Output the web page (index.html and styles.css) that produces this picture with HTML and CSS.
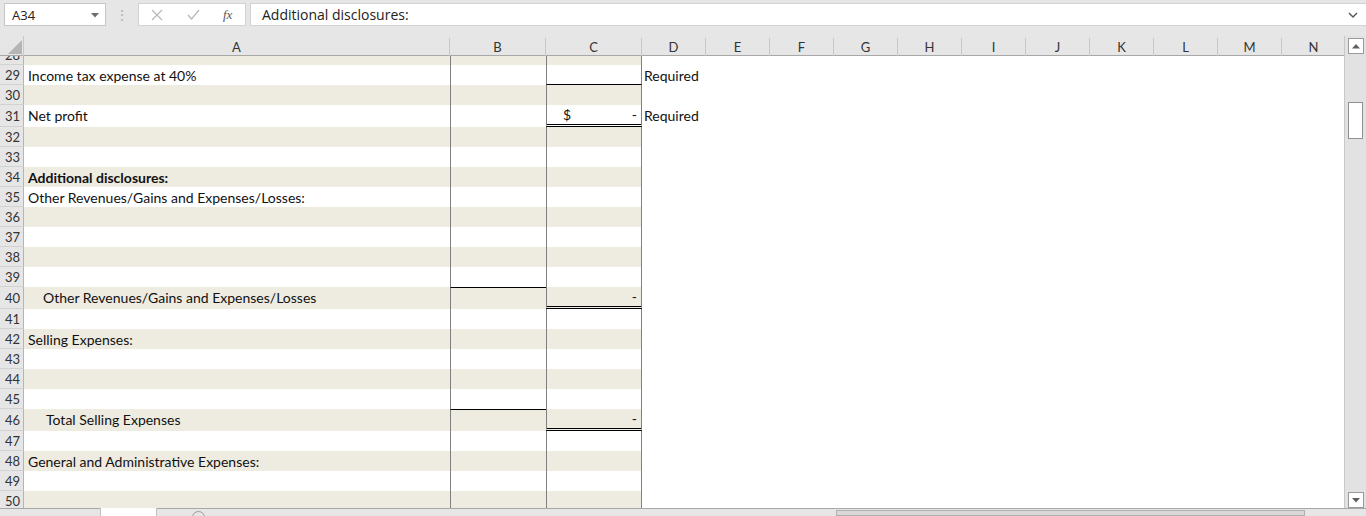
FILE: index.html
```html
<!DOCTYPE html>
<html>
<head>
<meta charset="utf-8">
<link rel="stylesheet" href="styles.css">
</head>
<body>
<div class="app">
  <div class="fbar">
    <div class="namebox">
      <span class="nb-text">A34</span>
      <svg class="nb-arrow" width="8" height="5" viewBox="0 0 8 5"><polygon points="0,0 8,0 4,4.5" fill="#6d6d6d"/></svg>
    </div>
    <div class="dots">⋮</div>
    <div class="fbtns">
      <svg class="fb-x" width="12" height="12" viewBox="0 0 12 12"><path d="M1 1 L11 11 M11 1 L1 11" stroke="#b8b8b8" stroke-width="1.2" fill="none"/></svg>
      <svg class="fb-ok" width="13" height="11" viewBox="0 0 13 11"><path d="M1 6 L4.5 10 L12 1" stroke="#b8b8b8" stroke-width="1.2" fill="none"/></svg>
      <span class="fx">fx</span>
    </div>
    <div class="finput">
      <span class="ftext">Additional disclosures:</span>
      <svg class="fchev" width="10" height="6" viewBox="0 0 10 6"><path d="M1 1 L5 5 L9 1" stroke="#555" stroke-width="1.4" fill="none"/></svg>
    </div>
  </div>
  <div class="main">
    <div class="sheet">
      <div class="colhdr">
        <div class="corner"><svg width="24" height="20" viewBox="0 0 24 20"><polygon points="8,18 22,18 22,4" fill="#b5b5b5"/></svg></div>
        <div class="ch cha">A</div>
        <div class="ch">B</div>
        <div class="ch">C</div>
        <div class="ch">D</div>
        <div class="ch">E</div>
        <div class="ch">F</div>
        <div class="ch">G</div>
        <div class="ch">H</div>
        <div class="ch">I</div>
        <div class="ch">J</div>
        <div class="ch">K</div>
        <div class="ch">L</div>
        <div class="ch">M</div>
        <div class="ch">N</div>
      </div>
      <div class="rowsclip">
        <div class="rows">
          <div class="row tan first"><div class="rh">28</div><div class="a"></div><div class="b"></div><div class="c"></div><div class="d"></div></div>
          <div class="row"><div class="rh">29</div><div class="a">Income tax expense at 40%</div><div class="b"></div><div class="c bb"></div><div class="d">Required</div></div>
          <div class="row tan"><div class="rh">30</div><div class="a"></div><div class="b"></div><div class="c"></div><div class="d"></div></div>
          <div class="row tall"><div class="rh">31</div><div class="a">Net profit</div><div class="b"></div><div class="c dbl acct"><span class="cur">$</span><span class="dash">-</span></div><div class="d">Required</div></div>
          <div class="row tan"><div class="rh">32</div><div class="a"></div><div class="b"></div><div class="c"></div><div class="d"></div></div>
          <div class="row"><div class="rh">33</div><div class="a"></div><div class="b"></div><div class="c"></div><div class="d"></div></div>
          <div class="row tan"><div class="rh">34</div><div class="a bold">Additional disclosures:</div><div class="b"></div><div class="c"></div><div class="d"></div></div>
          <div class="row"><div class="rh">35</div><div class="a">Other Revenues/Gains and Expenses/Losses:</div><div class="b"></div><div class="c"></div><div class="d"></div></div>
          <div class="row tan"><div class="rh">36</div><div class="a"></div><div class="b"></div><div class="c"></div><div class="d"></div></div>
          <div class="row"><div class="rh">37</div><div class="a"></div><div class="b"></div><div class="c"></div><div class="d"></div></div>
          <div class="row tan"><div class="rh">38</div><div class="a"></div><div class="b"></div><div class="c"></div><div class="d"></div></div>
          <div class="row"><div class="rh">39</div><div class="a"></div><div class="b"></div><div class="c"></div><div class="d"></div></div>
          <div class="row tan tall"><div class="rh">40</div><div class="a ind1">Other Revenues/Gains and Expenses/Losses</div><div class="b bt"></div><div class="c dbl acct"><span class="cur"></span><span class="dash">-</span></div><div class="d"></div></div>
          <div class="row"><div class="rh">41</div><div class="a"></div><div class="b"></div><div class="c"></div><div class="d"></div></div>
          <div class="row tan"><div class="rh">42</div><div class="a">Selling Expenses:</div><div class="b"></div><div class="c"></div><div class="d"></div></div>
          <div class="row"><div class="rh">43</div><div class="a"></div><div class="b"></div><div class="c"></div><div class="d"></div></div>
          <div class="row tan"><div class="rh">44</div><div class="a"></div><div class="b"></div><div class="c"></div><div class="d"></div></div>
          <div class="row"><div class="rh">45</div><div class="a"></div><div class="b"></div><div class="c"></div><div class="d"></div></div>
          <div class="row tan tall"><div class="rh">46</div><div class="a ind2">Total Selling Expenses</div><div class="b bt"></div><div class="c dbl acct"><span class="cur"></span><span class="dash">-</span></div><div class="d"></div></div>
          <div class="row"><div class="rh">47</div><div class="a"></div><div class="b"></div><div class="c"></div><div class="d"></div></div>
          <div class="row tan"><div class="rh">48</div><div class="a">General and Administrative Expenses:</div><div class="b"></div><div class="c"></div><div class="d"></div></div>
          <div class="row"><div class="rh">49</div><div class="a"></div><div class="b"></div><div class="c"></div><div class="d"></div></div>
          <div class="row tan"><div class="rh">50</div><div class="a"></div><div class="b"></div><div class="c"></div><div class="d"></div></div>
        </div>
      </div>
    </div>
    <div class="vscroll">
      <div class="sbtn"><svg width="8" height="5" viewBox="0 0 8 5"><polygon points="0,4.5 8,4.5 4,0" fill="#606060"/></svg></div>
      <div class="strack"><div class="sthumb"></div></div>
      <div class="sbtn"><svg width="8" height="5" viewBox="0 0 8 5"><polygon points="0,0 8,0 4,4.5" fill="#606060"/></svg></div>
    </div>
  </div>
  <div class="tabs">
    <div class="tabgap"></div>
    <div class="tab"></div>
    <div class="newsheet"></div>
    <div class="tabfill"></div>
    <div class="hscroll"></div>
    <div class="hfill"></div>
  </div>
</div>
</body>
</html>
```

FILE: styles.css
```css
* { box-sizing: border-box; }
html, body { margin: 0; padding: 0; }
body {
  width: 1366px;
  height: 516px;
  overflow: hidden;
  background: #e6e6e6;
  font-family: Lato, "Open Sans", sans-serif;
  color: #000;
}
.app { width: 1366px; height: 516px; display: flex; flex-direction: column; overflow: hidden; }

/* formula bar */
.fbar {
  height: 36px;
  flex: none;
  display: flex;
  align-items: flex-start;
  padding-top: 3px;
  background: #e6e6e6;
}
.namebox {
  margin-left: 4px;
  width: 102px;
  height: 23px;
  background: #fff;
  border: 1px solid #c6c6c6;
  display: flex;
  align-items: center;
  padding-left: 7px;
  padding-right: 6px;
  justify-content: space-between;
}
.nb-text { font-size: 13px; color: #222; font-family: "Open Sans", sans-serif; }
.nb-arrow { margin-top: 1px; }
.dots { width: 32px; text-align: center; color: #b3b3b3; font-size: 14px; line-height: 23px; }
.fbtns {
  width: 108px;
  height: 23px;
  background: #fff;
  border: 1px solid #d4d4d4;
  display: flex;
  align-items: center;
  padding-left: 12px;
}
.fb-x { margin-right: 24px; }
.fb-ok { margin-right: 23px; }
.fx { font-family: "Liberation Serif", serif; font-style: italic; font-size: 13px; color: #555; }
.finput {
  margin-left: 4px;
  flex: 1;
  height: 23px;
  background: #fff;
  border: 1px solid #d4d4d4;
  border-right: none;
  display: flex;
  align-items: center;
  justify-content: space-between;
  padding-left: 11px;
  padding-right: 8px;
}
.ftext { font-size: 14px; color: #222; font-family: "Open Sans", sans-serif; }

/* main */
.main { flex: 1; display: flex; min-height: 0; }
.sheet { width: 1344px; flex: none; display: flex; flex-direction: column; overflow: hidden; }

.colhdr {
  height: 20px;
  flex: none;
  display: grid;
  grid-template-columns: 24px 426px 96px 96px repeat(10, 64px) 64px;
  border-bottom: 1px solid #a8a8a8;
  background: #e6e6e6;
}
.corner { border-right: 1px solid #c8c8c8; }
.corner svg { display: block; }
.ch {
  font-size: 13px;
  color: #333;
  text-align: center;
  line-height: 19px;
  border-right: 1px solid #c8c8c8;
  margin-top: 2px;
}

.rowsclip { flex: 1; overflow: hidden; background: #fff; }
.rows { margin-top: -11px; }
.row {
  display: grid;
  grid-template-columns: 24px 426px 96px 96px 1fr;
  height: 20px;
  font-size: 14px;
  color: #111;
}
.row.tall { height: 22px; }
.rh {
  background: #e6e6e6;
  border-right: 1px solid #b5b5b5;
  border-bottom: 1px solid #d2d2d2;
  font-size: 13px;
  color: #333;
  padding-right: 3px;
  display: flex;
  align-items: center;
  justify-content: flex-end;
}
.a, .b, .c, .d {
  display: flex;
  align-items: center;
  white-space: nowrap;
}
.tall .a, .tall .d { padding-bottom: 2px; }
.a { padding-left: 4px; }
.b { border-left: 1px solid #808080; }
.c { border-left: 1px solid #808080; border-right: 1px solid #808080; }
.d { padding-left: 2px; overflow: visible; }
.tan .a, .tan .b, .tan .c { background: #eeece1; }
.bold { font-weight: 700; }
.ind1 { padding-left: 19px; }
.ind2 { padding-left: 22px; }
.bb { border-bottom: 1px solid #000; }
.bt { border-top: 1px solid #000; }
.dbl { border-bottom: 3px double #000; }
.acct { justify-content: space-between; padding-left: 16px; padding-right: 4px; }

/* vertical scrollbar */
.vscroll {
  flex: 1;
  display: flex;
  flex-direction: column;
  align-items: center;
  padding-top: 2px;
  background: #e2e2e2;
  border-left: 1px solid #c8c8c8;
}
.sbtn {
  width: 16px;
  height: 16px;
  background: #fff;
  border: 1px solid #9a9a9a;
  display: flex;
  align-items: center;
  justify-content: center;
  flex: none;
}
.strack { flex: 1; width: 100%; display: flex; justify-content: center; padding-top: 48px; }
.sthumb { width: 15px; height: 37px; background: #fff; border: 1px solid #8f8f8f; }

/* bottom tabs */
.tabs {
  height: 8px;
  flex: none;
  display: flex;
  background: #e6e6e6;
  border-top: 1px solid #a8a8a8;
}
.tabgap { width: 100px; }
.tab { width: 57px; background: #fff; border-left: 1px solid #c0c0c0; border-right: 1px solid #c0c0c0; margin-top: -1px; }
.newsheet { width: 13px; height: 13px; border: 1px solid #9a9a9a; border-radius: 50%; margin-left: 35px; margin-top: 2px; }
.tabfill { width: 631px; }
.hscroll { width: 469px; height: 6px; margin-top: 1px; background: #d8d8d8; border: 1px solid #b0b0b0; }
.hfill { flex: 1; }
```
